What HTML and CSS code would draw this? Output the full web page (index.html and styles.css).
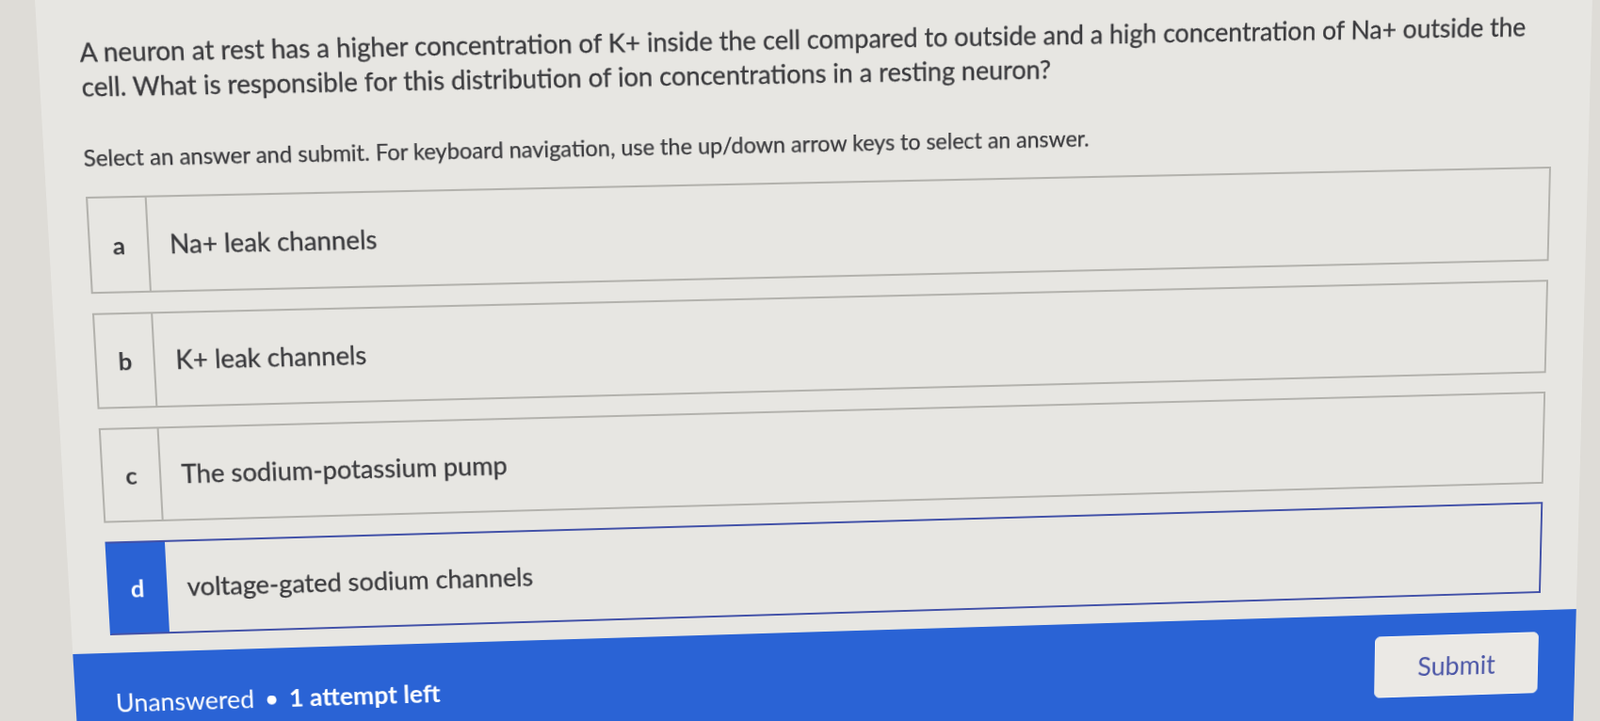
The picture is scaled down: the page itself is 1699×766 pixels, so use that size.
FILE: index.html
```html
<!DOCTYPE html>
<html lang="en">
<head>
<meta charset="utf-8">
<title>Question</title>
<link rel="stylesheet" href="styles.css">
</head>
<body>
<div class="stage">
  <main class="card">
    <section class="content">
      <h1 class="question">A neuron at rest has a higher concentration of K+ inside the cell compared to outside and a high concentration of Na+ outside the<br>cell. What is responsible for this distribution of ion concentrations in a resting neuron?</h1>
      <p class="hint">Select an answer and submit. For keyboard navigation, use the up/down arrow keys to select an answer.</p>
      <ul class="options">
        <li class="option"><span class="letter">a</span><span class="label">Na+ leak channels</span></li>
        <li class="option"><span class="letter">b</span><span class="label">K+ leak channels</span></li>
        <li class="option"><span class="letter">c</span><span class="label">The sodium-potassium pump</span></li>
        <li class="option selected"><span class="letter">d</span><span class="label">voltage-gated sodium channels</span></li>
      </ul>
    </section>
    <footer class="bar">
      <p class="status">Unanswered <span class="dot">&bull;</span> <b>1 attempt left</b></p>
      <button class="submit" type="button">Submit</button>
    </footer>
  </main>
</div>
</body>
</html>
```
FILE: styles.css
```css
html, body {
  margin: 0;
  height: 100%;
  overflow: hidden;
  background: #dedcd7;
}

body {
  font-family: Lato, "Open Sans", sans-serif;
  color: #3a3a3d;
}

.stage {
  display: flow-root;
  width: 1699px;
  height: 830px;
  transform-origin: 0 0;
  transform: matrix3d(1.058923, -0.017473, 0, 0.000020545,
                      0.063574, 1.062379, 0, 0.000054187,
                      0, 0, 1, 0,
                      -30.251, 8.4106, 0, 1);
}

.card {
  margin-top: -40px;
  margin-left: 64px;
  width: 1617px;
  height: 870px;
  background: #e7e6e2;
  padding-top: 69px;
  box-sizing: border-box;
}

.content {
  padding: 0 40px;
}

.question {
  margin: 0 0 0 2px;
  font-size: 26.6px;
  font-weight: 400;
  line-height: 35px;
  -webkit-text-stroke: 0.3px #3a3a3d;
}

.hint {
  margin: 40px 0 0 0;
  font-size: 23px;
  line-height: 28px;
  -webkit-text-stroke: 0.25px #3a3a3d;
}

.options {
  list-style: none;
  margin: 26px 0 0;
  padding: 0;
  display: flex;
  flex-direction: column;
  gap: 20px;
}

.option {
  display: flex;
  height: 100px;
  box-sizing: border-box;
  border: 2px solid #b3b2ad;
}

.letter {
  flex: none;
  width: 58px;
  border-right: 2px solid #b3b2ad;
  display: flex;
  align-items: center;
  justify-content: center;
  font-size: 25px;
  font-weight: 700;
}

.label {
  display: flex;
  align-items: center;
  padding-left: 21px;
  font-size: 26.8px;
  -webkit-text-stroke: 0.3px #3a3a3d;
}

.selected {
  border-color: #4251a8;
  border-left-color: #2a62d4;
}

.selected .letter {
  background: #2a62d4;
  color: #ffffff;
  border-right-color: #2a62d4;
}

.bar {
  margin-top: 19px;
  height: 150px;
  box-sizing: border-box;
  padding: 24px 41px 0 42px;
  background: #2a63d5;
  display: flex;
  justify-content: space-between;
  align-items: flex-start;
}

.status {
  margin: 14.5px 0 0;
  color: #ffffff;
  font-size: 26.4px;
  line-height: 30px;
}

.status b {
  font-weight: 700;
}

.dot {
  margin: 0 4px;
}

.submit {
  width: 181px;
  height: 68px;
  border: 1px solid #f4f3f0;
  border-radius: 6px;
  background: #ebe9e5;
  color: #4a55a6;
  font-family: Lato, "Open Sans", sans-serif;
  font-size: 28px;
}
```
